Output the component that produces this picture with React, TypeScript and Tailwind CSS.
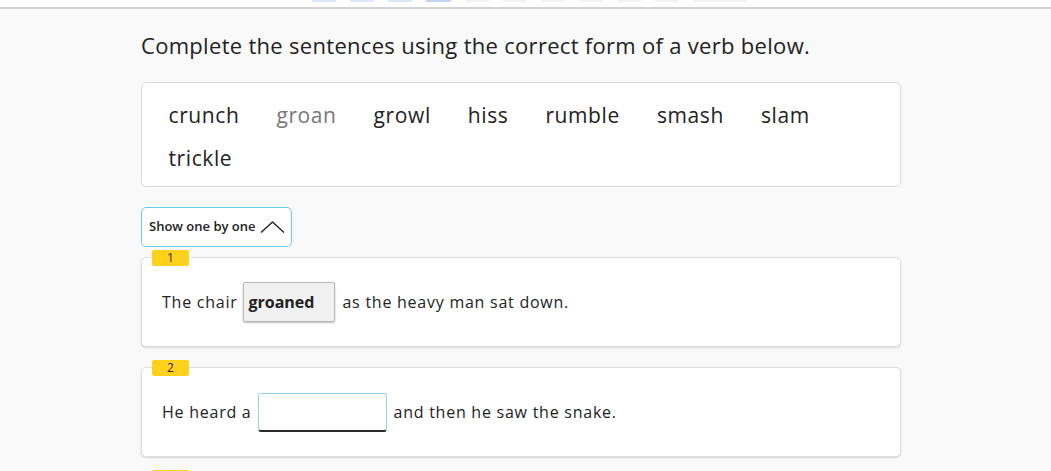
const words = ["crunch", "groan", "growl", "hiss", "rumble", "smash", "slam", "trickle"]
const used = ["groan"]

function Badge({ n }: { n?: number }) {
  return (
    <div className="absolute -top-[8px] left-[10px] flex h-[16px] w-[37px] items-center justify-center rounded-[2px] bg-[#ffd11a] text-[12px] leading-none text-[#222]">
      {n}
    </div>
  )
}

function Card({ n, children }: { n?: number; children?: React.ReactNode }) {
  return (
    <div className="relative rounded-[5px] border border-[#dedede] bg-white px-[20px] py-[24px] shadow-[0_1px_2px_rgba(0,0,0,0.15)]">
      <Badge n={n} />
      <div className="flex h-[40px] items-center text-[16px] tracking-[0.75px] text-[#222]">{children}</div>
    </div>
  )
}

function ChevronUp() {
  return (
    <svg width="25" height="14" viewBox="0 0 25 14" fill="none" className="ml-[4px]">
      <polyline points="1,12.5 12.5,2 24,12.5" stroke="#222" strokeWidth="1.4" strokeLinejoin="round" />
    </svg>
  )
}

export default function App() {
  return (
    <div className="min-h-[471px] bg-[#f9f9f9] font-['Open_Sans',sans-serif] text-[#222]">
      <div className="h-[9px] border-b-2 border-[#d3d3d3] bg-white">
        <div className="flex pl-[312px]">
          {Array.from({ length: 11 }).map((_, i) => (
            <div
              key={i}
              className={
                i < 3
                  ? "mr-[14px] h-[2px] w-[24px] bg-[#dce6f8]"
                  : i === 3
                  ? "mr-[14px] h-[2px] w-[25px] bg-[#c3d3f1]"
                  : i === 10
                  ? "h-[2px] w-[54px] bg-[#f2f2f2]"
                  : "mr-[14px] h-[2px] w-[24px] bg-[#f2f2f2]"
              }
            />
          ))}
        </div>
      </div>

      <div className="ml-[141px] w-[760px] pb-[20px]">
        <h1 className="mt-[21px] text-[22px] leading-[30px] tracking-[0.3px]">
          Complete the sentences using the correct form of a verb below.
        </h1>

        <div className="mt-[22px] flex flex-wrap rounded-[5px] border border-[#d9d9d9] bg-white pb-[6px] pl-[8px] pr-[8px] pt-[11px]">
          {words.map((w) => (
            <span
              key={w}
              className={
                "px-[18.5px] text-[21px] leading-[43px] tracking-[0.6px] " +
                (used.includes(w) ? "text-[#777]" : "text-[#222]")
              }
            >
              {w}
            </span>
          ))}
        </div>

        <button className="mt-[20px] flex h-[40px] w-[151px] items-center rounded-[5px] border border-[#62cdec] bg-white pl-[7px] text-[13px] font-semibold text-[#222]">
          Show one by one
          <ChevronUp />
        </button>

        <div className="mt-[10px] flex flex-col gap-[20px]">
          <Card n={1}>
            <span>The chair</span>
            <span className="ml-[6px] mr-[7px] flex h-[40px] w-[92px] items-center rounded-[2px] border border-[#b8b8b8] bg-[#f1f1f1] pl-[4px] font-bold tracking-normal shadow-[0_1px_2px_rgba(0,0,0,0.25)]">
              groaned
            </span>
            <span>as the heavy man sat down.</span>
          </Card>
          <Card n={2}>
            <span>He heard a</span>
            <span className="ml-[6px] mr-[7px] h-[39px] w-[129px] rounded-[3px] border border-[#8fd3ee] border-b-2 border-b-[#2a2a2a] bg-white" />
            <span>and then he saw the snake.</span>
          </Card>
          <Card />
        </div>
      </div>
    </div>
  )
}
